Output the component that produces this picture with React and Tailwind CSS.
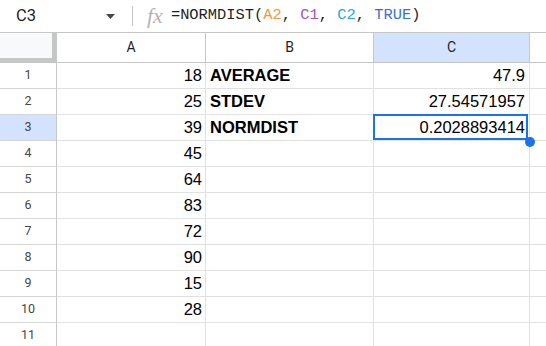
import React from "react";

const ROWS = [
  { a: "18", b: "AVERAGE", c: "47.9" },
  { a: "25", b: "STDEV", c: "27.54571957" },
  { a: "39", b: "NORMDIST", c: "0.2028893414", sel: true },
  { a: "45" },
  { a: "64" },
  { a: "83" },
  { a: "72" },
  { a: "90" },
  { a: "15" },
  { a: "28" },
  {},
];

const cellFont = { fontFamily: '"Liberation Sans", Arial, sans-serif' };
const uiFont = { fontFamily: 'Roboto, "Noto Sans", sans-serif' };

export default function App() {
  return (
    <div className="w-[546px] h-[346px] overflow-hidden bg-white relative">
      {/* Formula bar */}
      <div className="h-[33px] flex items-center border-b border-[#c7c7c7]" style={uiFont}>
        <div className="w-[132px] flex items-center shrink-0">
          <span className="pl-[16px] text-[16.5px] text-[#1f1f1f] leading-none">C3</span>
          <svg className="ml-[70px]" width="9" height="5" viewBox="0 0 9 5">
            <path d="M0 0 L9 0 L4.5 5 Z" fill="#444746" />
          </svg>
        </div>
        <div className="w-[1px] h-[20px] bg-[#c7c7c7] shrink-0" />
        <span
          className="ml-[14px] text-[22px] italic text-[#b4b4b4] leading-none shrink-0"
          style={{ fontFamily: '"Liberation Serif", serif' }}
        >
          fx
        </span>
        <span
          className="ml-[8px] text-[15.4px] text-[#1f1f1f] leading-none whitespace-pre"
          style={{ fontFamily: '"Liberation Mono", monospace' }}
        >
          =NORMDIST(
          <span className="text-[#f29a2e]">A2</span>,{" "}
          <span className="text-[#a055bd]">C1</span>,{" "}
          <span className="text-[#27a9cd]">C2</span>,{" "}
          <span className="text-[#3a70d6]">TRUE</span>)
        </span>
      </div>

      {/* Column header row */}
      <div className="h-[30px] flex" style={uiFont}>
        <div className="w-[57px] h-full bg-[#f8f9fa] border-r-[5px] border-b-[5px] border-[#c4c7c5] shrink-0" />
        <div className="w-[149px] h-full flex items-center justify-center border-r border-b border-[#c4c7c5] text-[14px] text-[#1f1f1f] shrink-0">
          A
        </div>
        <div className="w-[168px] h-full flex items-center justify-center border-r border-b border-[#c4c7c5] text-[14px] text-[#1f1f1f] shrink-0">
          B
        </div>
        <div className="w-[156px] h-full flex items-center justify-center border-r border-b border-[#c4c7c5] bg-[#d3e3fd] text-[14px] text-[#1f1f1f] shrink-0">
          C
        </div>
        <div className="flex-1 h-full border-b border-[#c4c7c5]" />
      </div>

      {/* Rows */}
      {ROWS.map((r, i) => (
        <div key={i} className="h-[26px] flex">
          <div
            className={`w-[57px] h-full flex items-center justify-center border-r border-r-[#c4c7c5] border-b border-b-[#d6d6d6] text-[12.5px] text-[#444746] shrink-0 ${
              r.sel ? "bg-[#d3e3fd]" : ""
            }`}
            style={uiFont}
          >
            {i + 1}
          </div>
          <div
            className="w-[149px] h-full flex items-center justify-end pr-[3px] border-r border-b border-[#e1e1e1] text-[16.5px] text-black shrink-0"
            style={cellFont}
          >
            {r.a}
          </div>
          <div
            className="w-[168px] h-full flex items-center pl-[4px] border-r border-b border-[#e1e1e1] text-[16.5px] font-bold text-black shrink-0"
            style={cellFont}
          >
            {r.b}
          </div>
          <div
            className="w-[156px] h-full relative flex items-center justify-end pr-[4px] border-r border-b border-[#e1e1e1] text-[16.5px] text-black shrink-0"
            style={cellFont}
          >
            {r.c}
            {r.sel && (
              <>
                <div className="absolute top-[-1px] left-[-1px] right-[1px] bottom-[0px] border-2 border-[#1a73e8] pointer-events-none" />
                <div className="absolute right-[-6px] bottom-[-7px] w-[10px] h-[10px] rounded-full bg-[#1a73e8] z-10" />
              </>
            )}
          </div>
          <div className="flex-1 h-full border-b border-[#e1e1e1]" />
        </div>
      ))}
    </div>
  );
}
